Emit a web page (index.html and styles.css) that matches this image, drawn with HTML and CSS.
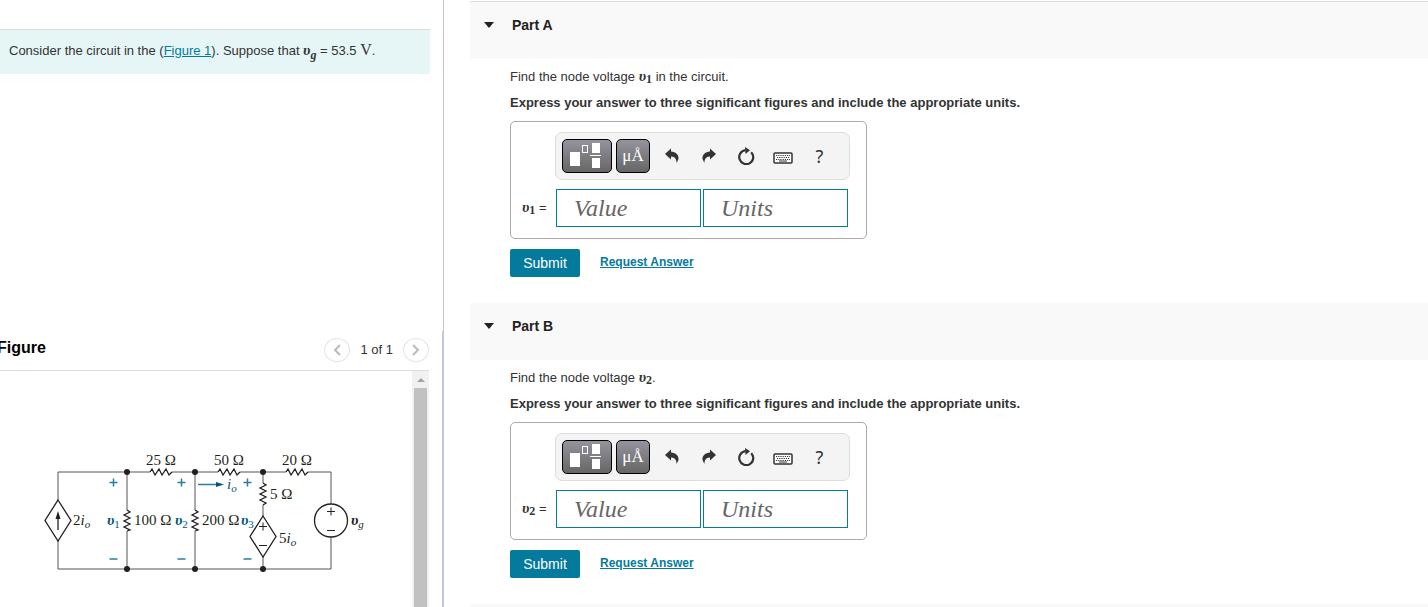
FILE: index.html
```html
<!DOCTYPE html>
<html lang="en">
<head>
    <meta charset="UTF-8">
    <meta name="viewport" content="width=device-width, initial-scale=1.0">
    <title>Node Voltage</title>
    <link rel="stylesheet" href="styles.css">
</head>
<body>
    <!-- Shared toolbar icons -->
    <svg class="sprite" aria-hidden="true">
        <symbol id="icon-template" viewBox="0 0 34 26">
            <rect x="0" y="9" width="10" height="14" fill="#fff"/>
            <rect x="12.5" y="2.5" width="5" height="7" fill="none" stroke="#fff"/>
            <rect x="22" y="0" width="8" height="10" fill="#fff"/>
            <rect x="20" y="12" width="11" height="1" fill="#fff"/>
            <rect x="22" y="15" width="8" height="10" fill="#fff"/>
        </symbol>
        <symbol id="icon-undo" viewBox="0 0 16 16">
            <path d="M1 6L7 0.5V3.5C11.5 3.8 15 6.5 14.500 11L12.600 15C12.500 11.500 11.500 8.600 7 8.500V11.500Z" fill="#333"/>
        </symbol>
        <symbol id="icon-redo" viewBox="0 0 16 16">
            <path d="M15 6L9 0.500V3.500C4.500 3.800 1 6.500 1.500 11L3.400 15C3.500 11.500 4.500 8.600 9 8.500V11.500Z" fill="#333"/>
        </symbol>
        <symbol id="icon-reset" viewBox="0 0 18 18">
            <path d="M14.200 5.200A7 7 0 1 1 8.500 3.200" fill="none" stroke="#333" stroke-width="2.200"/>
            <path d="M8 0L13 3.200L8.500 7Z" fill="#333"/>
        </symbol>
        <symbol id="icon-keyboard" viewBox="0 0 20 12">
            <rect x="1" y="1" width="18" height="10" rx="1" fill="#fff" stroke="#333" stroke-width="1.500"/>
            <path d="M3 3.500H17M4 5.500H17M3 7.500H17" stroke="#333" stroke-dasharray="1.200 1"/>
            <path d="M6 9H14" stroke="#333"/>
        </symbol>
    </svg>

    <aside class="sidebar">
        <p class="intro">Consider the circuit in the (<a href="#figure">Figure 1</a>). Suppose that <i class="math">υ<sub>g</sub></i> = 53.5 <span class="unit">V</span>.</p>

        <section class="figure-panel" id="figure">
            <header class="figure-header">
                <h2>Figure</h2>
                <nav class="pager">
                    <button type="button" aria-label="Previous figure"><svg width="8" height="12" viewBox="0 0 8 12"><path d="M7 1L2 6L7 11"/></svg></button>
                    <span>1 of 1</span>
                    <button type="button" aria-label="Next figure"><svg width="8" height="12" viewBox="0 0 8 12"><path d="M1 1L6 6L1 11"/></svg></button>
                </nav>
            </header>
            <div class="figure-view">
                <svg class="circuit" width="330" height="130" viewBox="0 0 330 130">
                    <!-- Wires -->
                    <g class="wire">
                        <path d="M18 50V22H110M132 22H178M200 22H246M268 22H291V54M291 87V119H18V91"/>
                        <path d="M87 22V60M87 81V119M155 22V60M155 81V119M223 22V33M223 55V66M223 107V119"/>
                    </g>
                    <!-- Resistors -->
                    <g class="part">
                        <path d="M110 22l2 -3l3 6l4 -6l3 6l4 -6l3 6l3 -3"/>
                        <path d="M178 22l2 -3l3 6l4 -6l3 6l4 -6l3 6l3 -3"/>
                        <path d="M246 22l2 -3l3 6l4 -6l3 6l4 -6l3 6l3 -3"/>
                        <path d="M87 60l3 2l-6 3l6 3l-6 3l6 3l-6 3l6 3l-3 1"/>
                        <path d="M155 60l3 2l-6 3l6 3l-6 3l6 3l-6 3l6 3l-3 1"/>
                        <path d="M223 33l3 2l-6 3l6 3l-6 3l6 3l-6 3l6 3l-3 2"/>
                        <!-- Sources -->
                        <path d="M18 50L31 70.500L18 91L5 70.500Z"/>
                        <path d="M223 66L236 86.500L223 107L210 86.500Z"/>
                        <circle cx="291" cy="70.500" r="16.500"/>
                        <path d="M18 80V68"/>
                        <path d="M287 61.500h8M291 57.500v8M287 80.500h8M219 76.500h8M223 72.500v8M219 95.500h8" stroke-width="1"/>
                    </g>
                    <path d="M18 61l2.500 8h-5z"/>
                    <g>
                        <circle cx="87" cy="22" r="3"/>
                        <circle cx="155" cy="22" r="3"/>
                        <circle cx="223" cy="22" r="3"/>
                        <circle cx="87" cy="119" r="3"/>
                        <circle cx="155" cy="119" r="3"/>
                        <circle cx="223" cy="119" r="3"/>
                    </g>
                    <!-- Polarity marks and current arrow -->
                    <path class="mark" d="M69.500 32.500h8M73.500 28.500v8M137.500 32.500h8M141.500 28.500v8M203.500 32.500h8M207.500 28.500v8M69.500 109h8M137.500 109h8M203.500 109h8M158 34.500h20"/>
                    <path class="arrow" d="M184 34.500l-8 -2.500v5z"/>
                    <!-- Labels -->
                    <text x="106" y="15">25 Ω</text>
                    <text x="174" y="15">50 Ω</text>
                    <text x="242" y="15">20 Ω</text>
                    <text x="230" y="49">5 Ω</text>
                    <text x="94" y="75">100 Ω</text>
                    <text x="162" y="75">200 Ω</text>
                    <text x="33" y="75">2<tspan class="var">i</tspan><tspan class="var sub" dy="3">o</tspan></text>
                    <text x="239" y="93">5<tspan class="var">i</tspan><tspan class="var sub" dy="3">o</tspan></text>
                    <text x="311" y="75"><tspan class="var bold">υ</tspan><tspan class="var sub" dy="3">g</tspan></text>
                    <g class="blue">
                        <text x="187" y="39"><tspan class="var">i</tspan><tspan class="var sub" dy="3">o</tspan></text>
                        <text x="67" y="75"><tspan class="var bold">υ</tspan><tspan class="sub" dy="3">1</tspan></text>
                        <text x="135" y="75"><tspan class="var bold">υ</tspan><tspan class="sub" dy="3">2</tspan></text>
                        <text x="201" y="75"><tspan class="var bold">υ</tspan><tspan class="sub" dy="3">3</tspan></text>
                    </g>
                </svg>
                <div class="scrollbar">
                    <span class="scroll-up"></span>
                    <span class="scroll-thumb"></span>
                </div>
            </div>
        </section>
    </aside>

    <main class="content">
        <section class="part-section">
            <header class="part-header">
                <span class="caret"></span>
                <h2>Part A</h2>
            </header>
            <form class="part-body">
                <p>Find the node voltage <i class="math">υ<sub class="num">1</sub></i> in the circuit.</p>
                <p class="hint">Express your answer to three significant figures and include the appropriate units.</p>
                <div class="answer-box">
                    <div class="toolbar">
                        <button type="button" class="key wide" aria-label="Templates"><svg width="34" height="26"><use href="#icon-template"/></svg></button>
                        <button type="button" class="key">μÅ</button>
                        <button type="button" class="tool" aria-label="Undo"><svg width="16" height="16"><use href="#icon-undo"/></svg></button>
                        <button type="button" class="tool" aria-label="Redo"><svg width="16" height="16"><use href="#icon-redo"/></svg></button>
                        <button type="button" class="tool" aria-label="Reset"><svg width="18" height="18"><use href="#icon-reset"/></svg></button>
                        <button type="button" class="tool keyboard" aria-label="Keyboard"><svg width="20" height="12"><use href="#icon-keyboard"/></svg></button>
                        <button type="button" class="tool">?</button>
                    </div>
                    <div class="fields">
                        <label for="value1"><i class="math">υ<sub class="num">1</sub></i> =</label>
                        <input type="text" id="value1" placeholder="Value">
                        <input type="text" id="units1" placeholder="Units" aria-label="Units">
                    </div>
                </div>
                <div class="actions">
                    <button type="submit" class="submit">Submit</button>
                    <a href="#">Request Answer</a>
                </div>
            </form>
        </section>

        <section class="part-section">
            <header class="part-header">
                <span class="caret"></span>
                <h2>Part B</h2>
            </header>
            <form class="part-body">
                <p>Find the node voltage <i class="math">υ<sub class="num">2</sub></i>.</p>
                <p class="hint">Express your answer to three significant figures and include the appropriate units.</p>
                <div class="answer-box">
                    <div class="toolbar">
                        <button type="button" class="key wide" aria-label="Templates"><svg width="34" height="26"><use href="#icon-template"/></svg></button>
                        <button type="button" class="key">μÅ</button>
                        <button type="button" class="tool" aria-label="Undo"><svg width="16" height="16"><use href="#icon-undo"/></svg></button>
                        <button type="button" class="tool" aria-label="Redo"><svg width="16" height="16"><use href="#icon-redo"/></svg></button>
                        <button type="button" class="tool" aria-label="Reset"><svg width="18" height="18"><use href="#icon-reset"/></svg></button>
                        <button type="button" class="tool keyboard" aria-label="Keyboard"><svg width="20" height="12"><use href="#icon-keyboard"/></svg></button>
                        <button type="button" class="tool">?</button>
                    </div>
                    <div class="fields">
                        <label for="value2"><i class="math">υ<sub class="num">2</sub></i> =</label>
                        <input type="text" id="value2" placeholder="Value">
                        <input type="text" id="units2" placeholder="Units" aria-label="Units">
                    </div>
                </div>
                <div class="actions">
                    <button type="submit" class="submit">Submit</button>
                    <a href="#">Request Answer</a>
                </div>
            </form>
        </section>
        <div class="part-header"></div>
    </main>
</body>
</html>
```
FILE: styles.css
```css
* {
    box-sizing: border-box;
}
body {
    display: flex;
    height: 100vh;
    margin: 0;
    overflow: hidden;
    font-family: "Liberation Sans", Arial, sans-serif;
    font-size: 13px;
    line-height: 20px;
    color: #333;
    background-color: #fff;
}
h2, p {
    margin: 0;
}
a {
    color: #047a9c;
}
button {
    padding: 0;
    font-family: inherit;
    cursor: pointer;
}
.sprite {
    display: none;
}
.math {
    font-family: "Liberation Serif", serif;
    font-size: 15px;
    font-weight: bold;
    line-height: 16px;
}
.math sub {
    font-size: 12px;
    line-height: 0;
    vertical-align: -4px;
}
.math .num {
    font-style: normal;
    font-size: 12px;
    vertical-align: -2px;
}
.unit {
    font-family: "Liberation Serif", serif;
    font-size: 16px;
    line-height: 16px;
}

/* Left column */
.sidebar {
    display: flex;
    flex-direction: column;
    justify-content: space-between;
    flex: 0 0 444px;
    border-right: 1px solid #c0c8d8;
}
.intro {
    height: 45px;
    margin: 29px 13px 0 0;
    padding: 11px 9px;
    background-color: #e6f6f6;
    border-top: 1px solid #d8dede;
}
.figure-panel {
    display: flex;
    flex-direction: column;
    height: 276px;
    padding-right: 13px;
    border-right: 1px solid #b8cce0;
}
.figure-header {
    display: flex;
    justify-content: space-between;
    height: 40px;
    border-bottom: 1px solid #ddd;
}
.figure-header h2 {
    margin: 7px 0 0 -3px;
    font-size: 16px;
    color: #000;
}
.pager {
    display: flex;
    align-items: center;
    gap: 10px;
    height: 38px;
    font-size: 13px;
}
.pager button {
    width: 26px;
    height: 24px;
    background-color: #fff;
    border: 1px solid #e4e4e4;
    border-radius: 50%;
}
.pager svg {
    display: block;
    margin: auto;
    fill: none;
    stroke: #bbb;
    stroke-width: 2;
}
.figure-view {
    display: flex;
    justify-content: space-between;
    flex: 1;
}
.scrollbar {
    display: flex;
    flex-direction: column;
    align-items: center;
    width: 17px;
    background-color: #f1f1f1;
}
.scroll-up {
    margin: 7px 0 6px;
    border: 4px solid transparent;
    border-top: 0;
    border-bottom-color: #a3a3a3;
}
.scroll-thumb {
    flex: 1;
    width: 13px;
    background-color: #c1c1c1;
}

/* Circuit drawing */
.circuit {
    margin: 79px 0 0 40px;
    fill: #231f20;
    font-family: "Liberation Serif", serif;
    font-size: 15px;
}
.wire {
    fill: none;
    stroke: #555;
}
.part {
    fill: none;
    stroke: #231f20;
    stroke-width: 1.3;
}
.var {
    font-style: italic;
}
.bold {
    font-weight: bold;
}
.sub {
    font-size: 11px;
}
.mark {
    fill: none;
    stroke: #2a7ea0;
    stroke-width: 1.5;
}
.blue, .arrow {
    fill: #00587f;
}

/* Right column */
.content {
    flex: 1;
    margin: 1px 0 0 26px;
    border-top: 1px solid #ddd;
    overflow: hidden;
}
.part-section {
    height: 301px;
}
.part-header {
    display: flex;
    align-items: flex-start;
    gap: 18px;
    height: 57px;
    padding: 13px 14px;
    background-color: #f9f9f9;
}
.part-header h2 {
    font-size: 14px;
    color: #222;
}
.caret {
    margin-top: 7px;
    border: 5px solid transparent;
    border-top: 6px solid #222;
    border-bottom: 0;
}
.part-body {
    padding: 8px 40px;
}
.hint {
    margin: 6px 0 8px;
    font-weight: bold;
}
.answer-box {
    width: 357px;
    height: 118px;
    padding: 10px 11px;
    border: 1px solid #aaa;
    border-radius: 5px;
}
.toolbar {
    display: flex;
    align-items: center;
    width: 295px;
    height: 48px;
    margin: 0 0 9px 33px;
    padding: 0 6px;
    background-color: #f4f4f4;
    border: 1px solid #ddd;
    border-radius: 7px;
}
.key {
    width: 34px;
    height: 34px;
    font-family: "Liberation Serif", serif;
    font-size: 17px;
    color: #fff;
    background: linear-gradient(#95939d, #666);
    border: 1px solid #000;
    border-radius: 5px;
}
.wide {
    width: 50px;
    margin-right: 4px;
}
.key svg, .tool svg {
    display: block;
    margin: auto;
}
.tool {
    width: 37px;
    height: 34px;
    font-family: "Noto Sans", sans-serif;
    font-size: 18px;
    color: #333;
    background: none;
    border: 0;
}
.key + .tool {
    margin-left: 3px;
}
.keyboard {
    padding-top: 3px;
}
.fields {
    display: flex;
    align-items: center;
    gap: 2px;
}
.fields label {
    width: 32px;
    white-space: nowrap;
}
.fields input {
    width: 145px;
    height: 38px;
    padding: 0 17px;
    font-family: "Liberation Serif", serif;
    font-size: 24px;
    font-style: italic;
    border: 1px solid #047a9c;
}
.fields input::placeholder {
    color: #666;
}
.actions {
    display: flex;
    gap: 20px;
    margin-top: 10px;
}
.submit {
    width: 70px;
    height: 28px;
    font-size: 14px;
    color: #fff;
    background-color: #047a9c;
    border: 0;
    border-radius: 2px;
}
.actions a {
    margin-top: 3px;
    font-size: 12px;
    font-weight: bold;
}
```
